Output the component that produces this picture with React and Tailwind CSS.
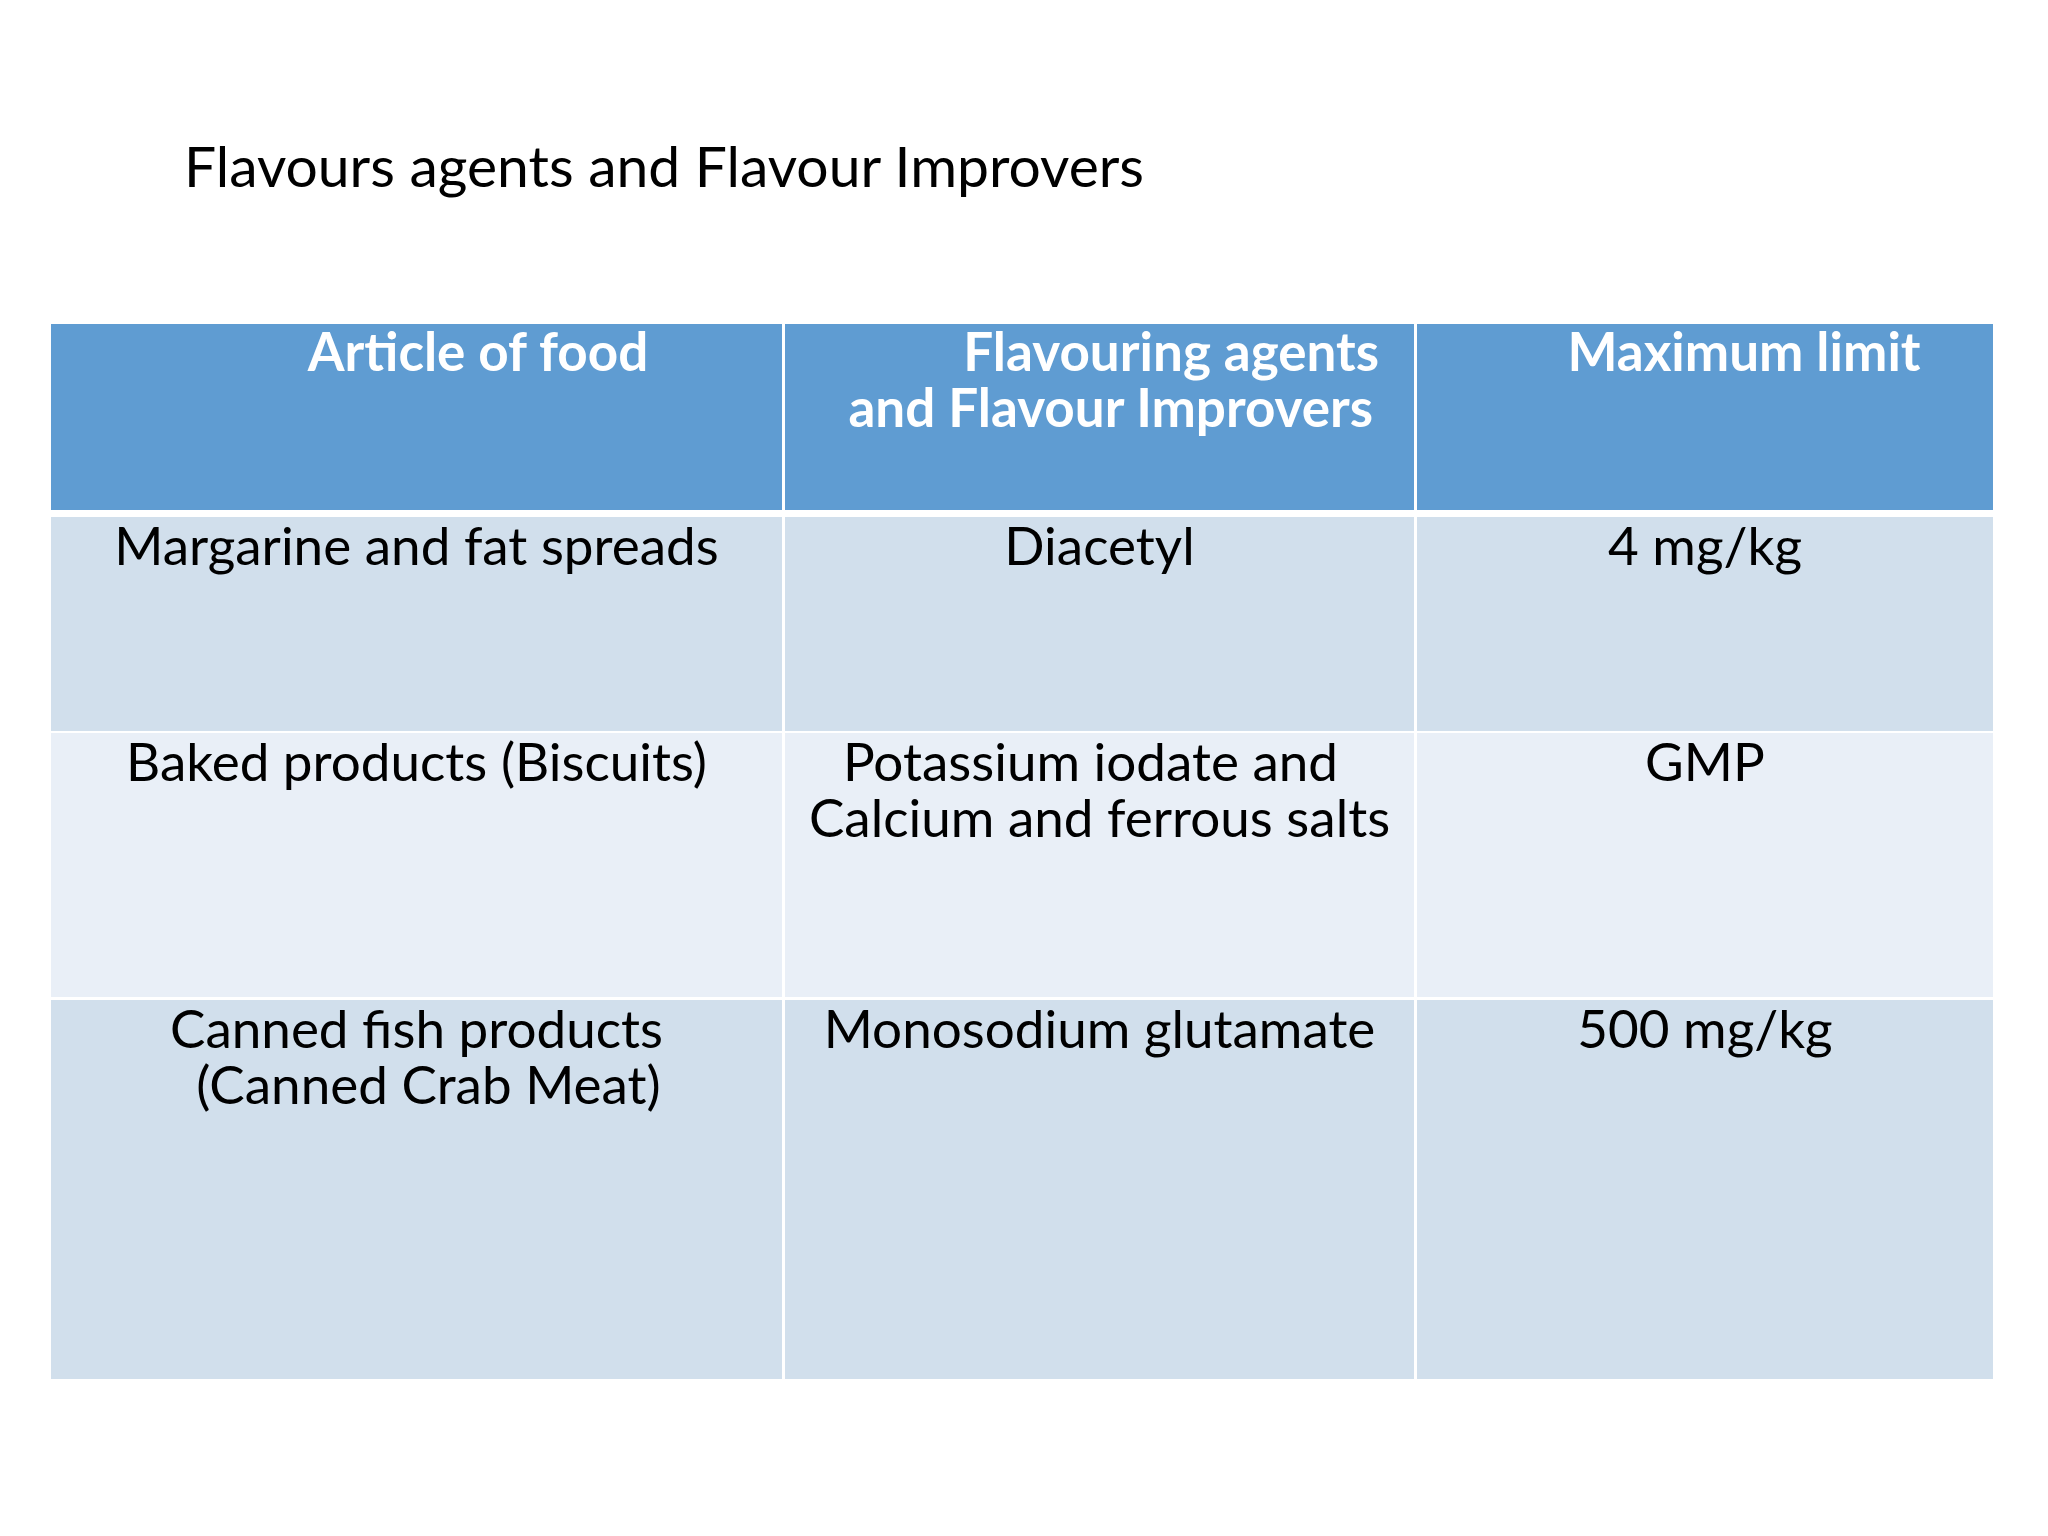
export default function App() {
  const font = { fontFamily: "Lato, 'Open Sans', sans-serif" };
  return (
    <div className="w-[2048px] h-[1536px] bg-white text-black" style={font}>
      <div className="pt-[132px] pl-[184px] text-[57px] leading-[66px]">
        Flavours agents and Flavour Improvers
      </div>
      <div className="mt-[126px] ml-[51px] w-[1942px] flex flex-col bg-white">
        {/* header */}
        <div className="grid grid-cols-[731px_629px_576px] gap-x-[3px] h-[186px] font-bold text-white text-[53px] leading-[56px]">
          <div className="bg-[#5f9cd2] pl-[123px] text-center">
            <div className="-mt-[1px]">Article of food</div>
          </div>
          <div className="bg-[#5f9cd2] pr-[35px] text-right">
            <div className="-mt-[1px]">Flavouring agents</div>
            <div className="pr-[6px]">and Flavour Improvers</div>
          </div>
          <div className="bg-[#5f9cd2] pl-[78px] text-center">
            <div className="-mt-[1px]">Maximum limit</div>
          </div>
        </div>
        {/* row 1 */}
        <div className="mt-[7px] grid grid-cols-[731px_629px_576px] gap-x-[3px] h-[214px] text-[53px] leading-[56px]">
          <div className="bg-[#d1dfec] text-center">Margarine and fat spreads</div>
          <div className="bg-[#d1dfec] text-center">Diacetyl</div>
          <div className="bg-[#d1dfec] text-center">4 mg/kg</div>
        </div>
        {/* row 2 */}
        <div className="mt-[2px] grid grid-cols-[731px_629px_576px] gap-x-[3px] h-[264px] text-[53px] leading-[56px]">
          <div className="bg-[#e9eff7] text-center">Baked products (Biscuits)</div>
          <div className="bg-[#e9eff7] text-center">
            <div className="pr-[18px]">Potassium iodate and</div>
            <div>Calcium and ferrous salts</div>
          </div>
          <div className="bg-[#e9eff7] text-center">GMP</div>
        </div>
        {/* row 3 */}
        <div className="mt-[3px] grid grid-cols-[731px_629px_576px] gap-x-[3px] h-[379px] text-[53px] leading-[56px]">
          <div className="bg-[#d1dfec] text-center">
            <div>Canned fish products</div>
            <div className="pl-[24px]">(Canned Crab Meat)</div>
          </div>
          <div className="bg-[#d1dfec] text-center">Monosodium glutamate</div>
          <div className="bg-[#d1dfec] text-center">500 mg/kg</div>
        </div>
      </div>
    </div>
  );
}
